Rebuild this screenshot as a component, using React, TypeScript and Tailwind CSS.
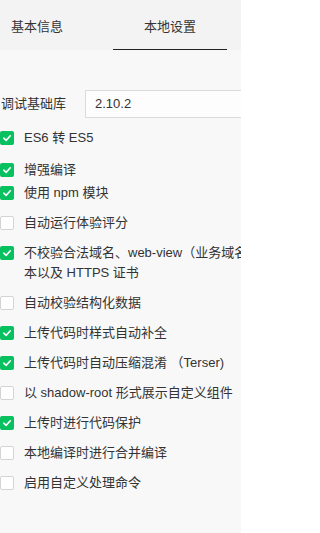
import React from 'react';

const options: { label: React.ReactNode; checked: boolean; mt: string }[] = [
  { label: 'ES6 转 ES5', checked: true, mt: 'mt-[10px]' },
  { label: '增强编译', checked: true, mt: 'mt-[12px]' },
  { label: '使用 npm 模块', checked: true, mt: 'mt-[3px]' },
  { label: '自动运行体验评分', checked: false, mt: 'mt-[10px]' },
  {
    label: (
      <>
        不校验合法域名、web-view（业务域名）、TLS 版
        <br />
        本以及 HTTPS 证书
      </>
    ),
    checked: true,
    mt: 'mt-[10px]',
  },
  { label: '自动校验结构化数据', checked: false, mt: 'mt-[10px]' },
  { label: '上传代码时样式自动补全', checked: true, mt: 'mt-[10px]' },
  { label: '上传代码时自动压缩混淆 （Terser)', checked: true, mt: 'mt-[10px]' },
  { label: '以 shadow-root 形式展示自定义组件', checked: false, mt: 'mt-[10px]' },
  { label: '上传时进行代码保护', checked: true, mt: 'mt-[10px]' },
  { label: '本地编译时进行合并编译', checked: false, mt: 'mt-[10px]' },
  { label: '启用自定义处理命令', checked: false, mt: 'mt-[10px]' },
];

const Checkbox: React.FC<{ checked: boolean }> = ({ checked }) =>
  checked ? (
    <span className="mt-[3px] flex h-[14px] w-[14px] shrink-0 items-center justify-center rounded-[2px] bg-[#07c160]">
      <svg width="10" height="10" viewBox="0 0 10 10" fill="none">
        <path d="M1.8 5.2 L4.1 7.4 L8.3 2.8" stroke="white" strokeWidth="1.6" strokeLinecap="round" strokeLinejoin="round" />
      </svg>
    </span>
  ) : (
    <span className="mt-[3px] h-[14px] w-[14px] shrink-0 rounded-[2px] border border-[#d4d4d4] bg-white" />
  );

export default function App() {
  return (
    <div
      className="h-[533px] w-[241px] overflow-hidden bg-[#f8f8f8] text-[13px] text-[#333]"
      style={{ fontFamily: '"Liberation Sans", "Noto Sans CJK SC", sans-serif' }}
    >
      {/* Tabs */}
      <div className="flex h-[50px] bg-[#f3f3f3]">
        <div className="flex w-[113px] items-center pl-[11px] pt-[4px]">基本信息</div>
        <div className="flex w-[114px] items-center justify-center border-b border-[#222] pt-[4px]">本地设置</div>
      </div>

      <div className="w-[340px]">
        {/* Base library */}
        <div className="mt-[40px] flex items-center">
          <span className="w-[85px] pl-px">调试基础库</span>
          <div className="flex h-[28px] w-[220px] items-center border border-[#dcdcdc] bg-[#fdfdfd] pl-[9px]">2.10.2</div>
        </div>

        {/* Options */}
        {options.map((o, i) => (
          <div key={i} className={`${o.mt} flex items-start gap-[10px] leading-[20px]`}>
            <Checkbox checked={o.checked} />
            <span className="whitespace-nowrap">{o.label}</span>
          </div>
        ))}
      </div>
    </div>
  );
}
